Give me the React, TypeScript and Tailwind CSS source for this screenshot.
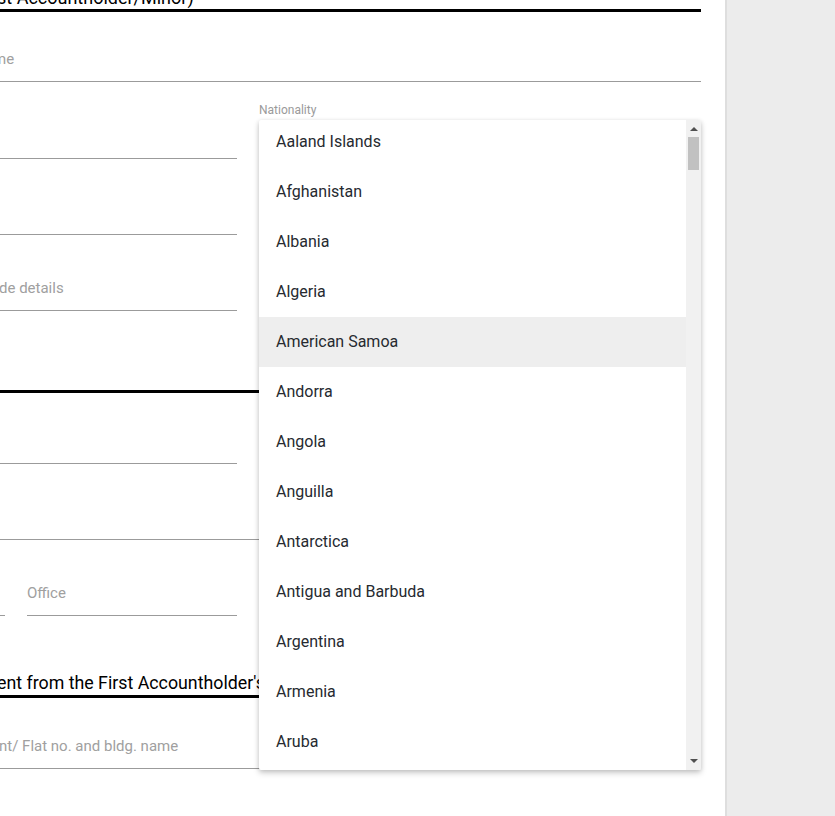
import React from 'react';

const countries = [
    'Aaland Islands',
    'Afghanistan',
    'Albania',
    'Algeria',
    'American Samoa',
    'Andorra',
    'Angola',
    'Anguilla',
    'Antarctica',
    'Antigua and Barbuda',
    'Argentina',
    'Armenia',
    'Aruba',
    'Australia',
    'Austria',
];

// Campo de texto estilo material: placeholder + subrayado
function Field({ placeholder, className = '', textClass = '' }: { placeholder?: string; className?: string; textClass?: string }) {
    return (
        <div className={`h-[34px] pb-[11px] border-b border-[#9b9b9b] ${className}`}>
            <div className={`h-[22px] leading-[22px] text-[15px] text-[#a0a0a0] whitespace-nowrap ${textClass}`}>
                {placeholder}
            </div>
        </div>
    );
}

function NationalityMenu() {
    return (
        <div className="absolute left-[259px] top-[131px] w-[442px] h-[650px] bg-white rounded-[2px] overflow-hidden flex shadow-[0_3px_6px_rgba(0,0,0,0.18),0_1px_4px_rgba(0,0,0,0.12)]">
            <ul className="flex-1 -mt-[3px]">
                {countries.map((c) => (
                    <li
                        key={c}
                        className={`h-[50px] flex items-center pl-[17px] text-[16px] text-[#262a30] ${c === 'American Samoa' ? 'bg-[#eeeeee]' : ''}`}
                    >
                        {c}
                    </li>
                ))}
            </ul>
            {/* Barra de scroll */}
            <div className="w-[15px] bg-[#f1f1f1] flex flex-col items-center">
                <div className="h-[17px] flex items-center justify-center pt-[1px]">
                    <div className="w-0 h-0 border-l-[4px] border-r-[4px] border-b-[4px] border-l-transparent border-r-transparent border-b-[#505050]" />
                </div>
                <div className="w-[11px] h-[33px] bg-[#c1c1c1]" />
                <div className="flex-1" />
                <div className="h-[17px] flex items-center justify-center pb-[1px]">
                    <div className="w-0 h-0 border-l-[4px] border-r-[4px] border-t-[4px] border-l-transparent border-r-transparent border-t-[#505050]" />
                </div>
            </div>
        </div>
    );
}

export default function App() {
    return (
        <div className="flex h-[816px] overflow-hidden bg-white" style={{ fontFamily: 'Roboto, "Liberation Sans", sans-serif' }}>
            <div className="w-[725px] shrink-0 bg-white">
                <div className="relative w-[701px]">
                    {/* Encabezado cortado arriba */}
                    <div className="-mt-[11px] h-[23px] border-b-[3px] border-black text-[18px] leading-[18px] text-black whitespace-nowrap">
                        <span className="-ml-[3px] inline-block">st Accountholder/Minor)</span>
                    </div>

                    <Field placeholder="me" className="mt-[36px]" textClass="-ml-[7px]" />

                    <div className="mt-[17px] flex gap-[22px]">
                        <div className="w-[237px] pt-[26px] flex flex-col gap-[42px]">
                            <Field />
                            <Field />
                            <Field placeholder="de details" textClass="-ml-[1px]" />
                        </div>
                        <div className="flex-1">
                            <div className="mt-[3px] text-[12px] leading-[16px] text-[#9a9a9a]">Nationality</div>
                        </div>
                    </div>

                    {/* Sección con línea gruesa */}
                    <div className="mt-[52px] h-[30px] border-b-[3px] border-black" />

                    <div className="mt-[37px] flex gap-[22px]">
                        <Field className="w-[237px]" />
                        <div className="flex-1" />
                    </div>

                    <Field className="mt-[42px]" />

                    <div className="mt-[42px] flex gap-[22px]">
                        <div className="w-[237px] flex gap-[22px]">
                            <Field className="w-[5px]" />
                            <Field placeholder="Office" className="flex-1" />
                        </div>
                        <div className="flex-1" />
                    </div>

                    {/* Dirección */}
                    <div className="mt-[55px] h-[27px] border-b-[3px] border-black text-[17.8px] leading-[24px] text-black whitespace-nowrap">
                        <span className="-ml-[3px] inline-block">ent from the First Accountholder's permanent address)</span>
                    </div>

                    <Field placeholder="nt/ Flat no. and bldg. name" className="mt-[37px]" textClass="-ml-[1px]" />

                    <NationalityMenu />
                </div>
            </div>
            <div className="flex-1 bg-[#ececec] border-l-2 border-[#dedede]" />
        </div>
    );
}
